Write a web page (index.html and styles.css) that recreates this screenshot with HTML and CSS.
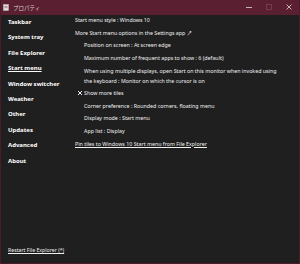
FILE: index.html
```html
<!DOCTYPE html>
<html>
<head>
<meta charset="utf-8">
<link rel="stylesheet" href="styles.css">
</head>
<body>
<div class="window">
  <div class="titlebar">
    <svg class="app-icon" width="6" height="7" viewBox="0 0 6 7"><rect x="0.5" y="0.5" width="5" height="6" fill="#e8e0e2" stroke="#bfb0b4" stroke-width="0.6"/><rect x="1.5" y="2" width="3" height="0.6" fill="#7a5a62"/><rect x="1.5" y="3.5" width="3" height="0.6" fill="#7a5a62"/></svg>
    <span class="title">プロパティ</span>
    <div class="controls">
      <svg class="ctl" width="20" height="15" viewBox="0 0 20 15"><line x1="6" y1="7.5" x2="12" y2="7.5" stroke="#e6d8dc" stroke-width="0.8"/></svg>
      <svg class="ctl" width="20" height="15" viewBox="0 0 20 15"><rect x="6.5" y="4.5" width="5" height="5" fill="none" stroke="#7d4c5a" stroke-width="0.7"/></svg>
      <svg class="ctl" width="20" height="15" viewBox="0 0 20 15"><path d="M6.5 4.5 L11.5 9.5 M11.5 4.5 L6.5 9.5" stroke="#e6d8dc" stroke-width="0.8"/></svg>
    </div>
  </div>
  <div class="body">
    <div class="sidebar">
      <div class="nav">
        <div class="nav-item">Taskbar</div>
        <div class="nav-item">System tray</div>
        <div class="nav-item">File Explorer</div>
        <div class="nav-item active">Start menu</div>
        <div class="nav-item">Window switcher</div>
        <div class="nav-item">Weather</div>
        <div class="nav-item">Other</div>
        <div class="nav-item">Updates</div>
        <div class="nav-item">Advanced</div>
        <div class="nav-item">About</div>
      </div>
      <div class="restart">Restart File Explorer (*)</div>
    </div>
    <div class="main">
      <div class="row">Start menu style : Windows 10</div>
      <div class="row">More Start menu options in the Settings app ↗</div>
      <div class="row sub">Position on screen : At screen edge</div>
      <div class="row sub">Maximum number of frequent apps to show : 6 (default)</div>
      <div class="row sub">When using multiple displays, open Start on this monitor when invoked using<br>the keyboard : Monitor on which the cursor is on</div>
      <div class="row check"><svg class="xmark" width="6" height="6" viewBox="0 0 6 6"><path d="M1 1 L5 5 M5 1 L1 5" stroke="#f0f0f0" stroke-width="1"/></svg><span>Show more tiles</span></div>
      <div class="row sub">Corner preference : Rounded corners, floating menu</div>
      <div class="row sub">Display mode : Start menu</div>
      <div class="row sub">App list : Display</div>
      <div class="row link">Pin tiles to Windows 10 Start menu from File Explorer</div>
    </div>
  </div>
</div>
</body>
</html>
```
FILE: styles.css
```css
html, body {
  margin: 0;
  padding: 0;
  background: #202020;
}
.window {
  width: 300px;
  height: 264px;
  box-sizing: border-box;
  border: 1px solid #4a1c28;
  border-top: none;
  display: flex;
  flex-direction: column;
  background: #1f1f1f;
  font-family: "Noto Sans", "Noto Sans CJK JP", sans-serif;
  color: #f2f2f2;
  overflow: hidden;
}
.titlebar {
  height: 15px;
  flex: none;
  background: #5a1f30;
  display: flex;
  align-items: center;
  margin: 0 -1px;
}
.app-icon {
  margin-left: 3px;
  flex: none;
}
.title {
  margin-left: 4px;
  font-size: 5.5px;
  color: #dccbd0;
  font-family: "Noto Sans CJK JP", sans-serif;
}
.controls {
  margin-left: auto;
  display: flex;
}
.ctl {
  display: block;
}
.body {
  flex: 1;
  display: flex;
  min-height: 0;
}
.sidebar {
  width: 74px;
  flex: none;
  display: flex;
  flex-direction: column;
  padding-left: 7px;
  box-sizing: border-box;
}
.nav-item {
  font-weight: bold;
  font-size: 6px;
  line-height: 15.4px;
  color: #ffffff;
  white-space: nowrap;
}
.nav-item.active {
  text-decoration: underline;
}
.restart {
  margin-top: auto;
  margin-bottom: 8px;
  font-size: 5.2px;
  line-height: 10px;
  text-decoration: underline;
  color: #f0f0f0;
  white-space: nowrap;
}
.main {
  flex: 1;
  display: flex;
  flex-direction: column;
  gap: 2.6px;
  padding-top: 0.3px;
  font-size: 5.3px;
  line-height: 10px;
  white-space: nowrap;
}
.row.sub {
  padding-left: 9px;
}
.row.check {
  display: flex;
  align-items: center;
  padding-left: 2px;
}
.xmark {
  margin-right: 1px;
}
.row.link {
  text-decoration: underline;
}
```
